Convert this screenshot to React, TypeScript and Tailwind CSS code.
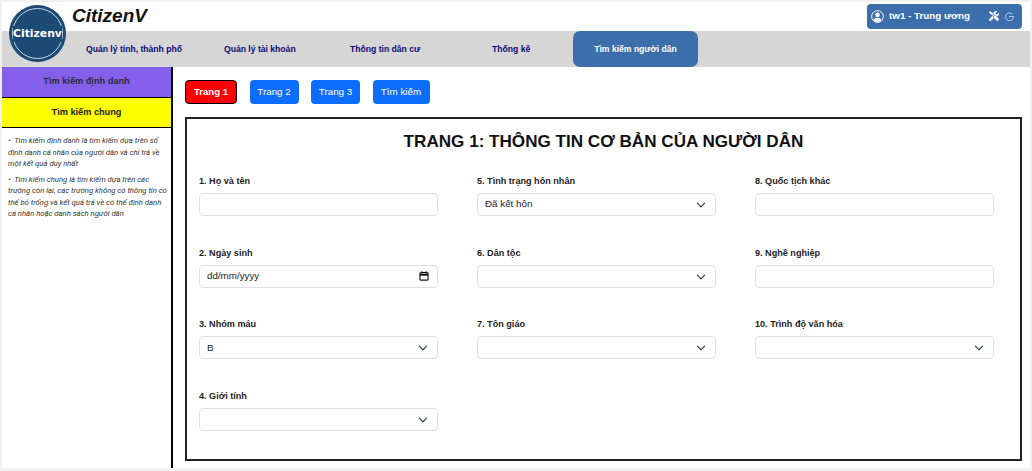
import React from "react";
import { FaTools } from "react-icons/fa";

function Chevron() {
  return (
    <svg className="absolute right-[10px] top-[9px] pointer-events-none" width="10" height="6" viewBox="0 0 16 10" fill="none" stroke="#343a40" strokeWidth="2" strokeLinecap="round" strokeLinejoin="round">
      <path d="M2 2l6 6 6-6" />
    </svg>
  );
}

const inputBox = "block w-full h-[23px] rounded-[4px] border border-[#dee2e6] bg-white px-[7px] text-[9.8px] text-[#212529] outline-none";

function Field({ label, kind, value }: { label: string; kind: "text" | "date" | "select"; value?: string }) {
  return (
    <div className="h-[71.7px]">
      <div className="h-[19px] pt-[1px] text-[9.1px] font-bold leading-[12px] text-[#222]">{label}</div>
      {kind === "text" && <input className={inputBox} readOnly />}
      {kind === "date" && (
        <div className={`${inputBox} flex items-center justify-between`}>
          <span>dd/mm/yyyy</span>
          <svg className="mr-[1px]" width="10" height="10" viewBox="0 0 16 16" fill="none" stroke="#111" strokeWidth="1.8">
            <rect x="1.5" y="2.5" width="13" height="12" rx="1.5" />
            <path d="M1.5 6h13" strokeWidth="3" />
            <path d="M4.500 0.500v3M11.500 0.500v3" />
          </svg>
        </div>
      )}
      {kind === "select" && (
        <div className="relative">
          <select className={`${inputBox} appearance-none`} value={value ?? ""} onChange={() => {}}>
            <option value="">{""}</option>
            {value && <option value={value}>{value}</option>}
          </select>
          <Chevron />
        </div>
      )}
    </div>
  );
}

export default function App() {
  return (
    <div className="w-[1032px] h-[471px] bg-[#f1f1f1] pt-[2px] pl-[2px] overflow-hidden font-['Liberation_Sans',Arial,sans-serif]">
      <div className="relative w-[1028px] h-[466px] bg-white flex flex-col">
        {/* logo */}
        <div className="absolute left-[7px] top-[3px] w-[57px] h-[57px] rounded-full bg-[#1b4a75] flex items-center justify-center z-10">
          <div className="absolute inset-[3px] rounded-full border border-[#c9d6e2]" />
          <span className="relative bg-[#1b4a75] text-white font-bold text-[10.8px] leading-[16px] font-['DejaVu_Sans',sans-serif]">Citizenv</span>
        </div>

        {/* top header */}
        <div className="h-[29px] flex items-center justify-between pl-[70px] pr-[8px]">
          <div className="italic font-bold text-[19px] text-[#111] leading-[24px] mt-[-1px]">CitizenV</div>
          <div className="w-[155px] h-[25px] mt-[-1px] rounded-[4px] bg-[#3b6eab] flex items-center pl-[4px] pr-[8px] text-white">
            <svg width="13" height="13" viewBox="0 0 16 16" fill="none">
              <circle cx="8" cy="8" r="7.2" stroke="white" strokeWidth="1.2" />
              <circle cx="8" cy="6" r="2.8" fill="white" />
              <path d="M3 12.600c1-2.200 3-3 5-3s4 .8 5 3c-1.200 1.400-3 2.200-5 2.200s-3.800-.8-5-2.200z" fill="white" />
            </svg>
            <span className="ml-[5px] text-[9.8px] font-bold whitespace-nowrap">tw1 - Trung ương</span>
            <FaTools className="ml-auto" size={10} />
            <svg className="ml-[6px]" width="9" height="9" viewBox="0 0 16 16" fill="none" stroke="#dbe6f2" strokeWidth="1.4" strokeLinecap="round">
              <path d="M13 3.500A7 7 0 1 0 15 8H8" />
            </svg>
          </div>
        </div>

        {/* nav */}
        <div className="h-[36px] bg-[#d6d6d6] flex items-stretch pl-[84px] text-[8.6px] font-bold text-[#0a0a78]">
          <div className="w-[138px] flex items-center whitespace-nowrap">Quản lý tỉnh, thành phố</div>
          <div className="w-[126px] flex items-center whitespace-nowrap">Quản lý tài khoản</div>
          <div className="w-[142px] flex items-center whitespace-nowrap">Thông tin dân cư</div>
          <div className="w-[81px] flex items-center whitespace-nowrap">Thống kê</div>
          <div className="w-[125px] rounded-[7px] bg-[#3b6eab] text-white flex items-center justify-center whitespace-nowrap">Tìm kiếm người dân</div>
        </div>

        {/* body */}
        <div className="flex-1 flex min-h-0">
          <aside className="w-[171px] shrink-0 border-r-2 border-black">
            <div className="h-[31px] bg-[#8460ea] border-b border-black flex items-center justify-center text-[9.2px] font-bold text-[#2b2b3a]">Tìm kiếm định danh</div>
            <div className="h-[30px] bg-[#ffff00] border-b border-black flex items-center justify-center text-[9.2px] font-bold text-[#222]">Tìm kiếm chung</div>
            <div className="pl-[6px] pr-[4px] pt-[7px] font-['Roboto',sans-serif] italic text-[7.7px] leading-[11.5px] text-[#333]">
              <p className="mb-[4px]">{"•\u00A0 Tìm kiếm định danh là tìm kiếm dựa trên số định danh cá nhân của người dân và chỉ trả về một kết quả duy nhất"}</p>
              <p>{"•\u00A0 Tìm kiếm chung là tìm kiếm dựa trên các trường còn lại, các trường không có thông tin có thể bỏ trống và kết quả trả về có thể định danh cá nhân hoặc danh sách người dân"}</p>
            </div>
          </aside>

          <main className="flex-1 min-w-0 pl-[12px] pr-[8px] pt-[13px] pb-[7px] flex flex-col">
            <div className="flex gap-[12.5px] h-[24px] shrink-0 text-[9.8px] text-white">
              <button className="w-[52px] rounded-[4px] bg-[#ff0000] border border-black font-bold text-[9.6px]">Trang 1</button>
              <button className="w-[49px] rounded-[4px] bg-[#0d6efd]">Trang 2</button>
              <button className="w-[49px] rounded-[4px] bg-[#0d6efd]">Trang 3</button>
              <button className="w-[57px] rounded-[4px] bg-[#0d6efd]">Tìm kiếm</button>
            </div>
            <div className="mt-[13px] flex-1 min-h-0 overflow-hidden border-2 border-[#222] px-[12px]">
              <h1 className="h-[55px] pt-[11px] text-center text-[17.1px] leading-[24px] font-bold text-[#111]">TRANG 1: THÔNG TIN CƠ BẢN CỦA NGƯỜI DÂN</h1>
              <div className="grid grid-cols-[239px_239px_239px] gap-x-[39px]">
                <div>
                  <Field label="1. Họ và tên" kind="text" />
                  <Field label="2. Ngày sinh" kind="date" />
                  <Field label="3. Nhóm máu" kind="select" value="B" />
                  <Field label="4. Giới tính" kind="select" />
                </div>
                <div>
                  <Field label="5. Tình trạng hôn nhân" kind="select" value="Đã kết hôn" />
                  <Field label="6. Dân tộc" kind="select" />
                  <Field label="7. Tôn giáo" kind="select" />
                </div>
                <div>
                  <Field label="8. Quốc tịch khác" kind="text" />
                  <Field label="9. Nghề nghiệp" kind="text" />
                  <Field label="10. Trình độ văn hóa" kind="select" />
                </div>
              </div>
            </div>
          </main>
        </div>
      </div>
    </div>
  );
}
